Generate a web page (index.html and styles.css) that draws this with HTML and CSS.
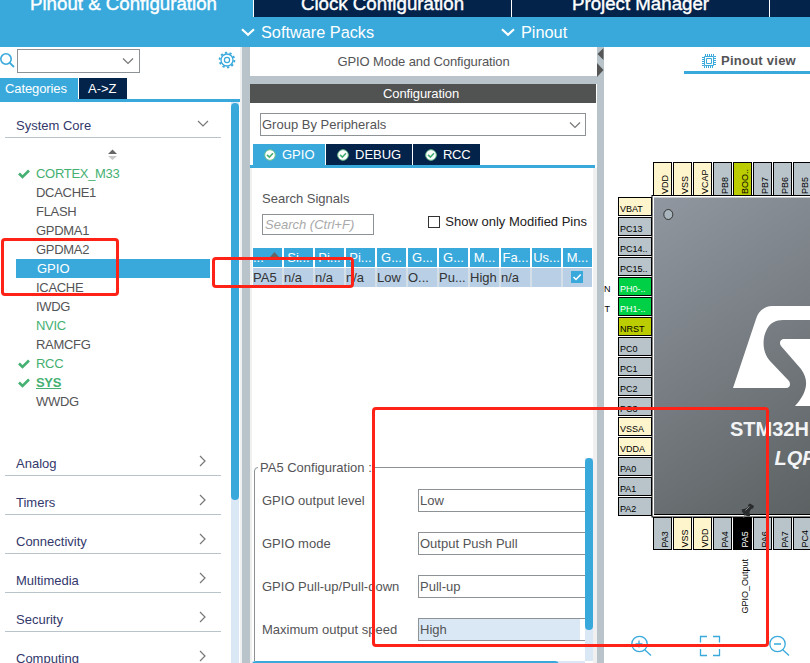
FILE: index.html
```html
<!DOCTYPE html>
<html lang="en">
<head>
    <meta charset="UTF-8">
    <meta name="viewport" content="width=device-width, initial-scale=1.0">
    <title>Pinout &amp; Configuration</title>
    <link rel="stylesheet" href="styles.css">
</head>
<body>
    <div class="app">
        <!-- Main tabs -->
        <div class="main-tabs">
            <div class="main-tab active">Pinout &amp; Configuration</div>
            <div class="main-tab">Clock Configuration</div>
            <div class="main-tab">Project Manager</div>
            <div class="main-tab rest"></div>
        </div>
        <div class="sub-bar">
            <div class="sub-item packs">
                <svg width="14" height="9" viewBox="0 0 14 9"><path d="M1 1.2l6 5.6 6-5.6" fill="none" stroke="#fff" stroke-width="2.2"/></svg>
                <span>Software Packs</span>
            </div>
            <div class="sub-item">
                <svg width="14" height="9" viewBox="0 0 14 9"><path d="M1 1.2l6 5.6 6-5.6" fill="none" stroke="#fff" stroke-width="2.2"/></svg>
                <span>Pinout</span>
            </div>
        </div>

        <div class="workspace">
            <!-- Categories -->
            <div class="sidebar">
                <div class="search-row">
                    <svg class="search-icon" width="15" height="15" viewBox="0 0 15 15"><circle cx="6" cy="6" r="5.2" fill="none" stroke="#39a9dc" stroke-width="1.6"/><path d="M9.8 9.8l4.2 4.2" stroke="#39a9dc" stroke-width="1.8"/></svg>
                    <div class="search-box">
                        <svg width="12" height="8" viewBox="0 0 12 8"><path d="M1 1.5l5 5 5-5" fill="none" stroke="#777" stroke-width="1.2"/></svg>
                    </div>
                    <svg class="gear" width="18" height="18" viewBox="0 0 18 18"><g fill="none" stroke="#39a9dc"><circle cx="9" cy="9" r="6" stroke-width="1.3"/><circle cx="9" cy="9" r="7.4" stroke-width="1.8" stroke-dasharray="2.3 2.35"/><circle cx="9" cy="9" r="2.6" stroke-width="1.2"/></g></svg>
                </div>
                <div class="side-tabs">
                    <div class="side-tab active">Categories</div>
                    <div class="side-tab">A-&gt;Z</div>
                </div>
                <div class="side-body">
                    <div class="tree">
                        <div class="group open">
                            <span>System Core</span>
                            <svg width="12" height="8" viewBox="0 0 12 8"><path d="M1 1l5 5 5-5" fill="none" stroke="#777" stroke-width="1.2"/></svg>
                        </div>
                        <div class="sorter">
                            <svg width="9" height="12" viewBox="0 0 9 12"><path d="M0 5l4.5-4.5L9 5z" fill="#666"/><path d="M0 7l4.5 4L9 7z" fill="#c8c8c8"/></svg>
                        </div>
                        <ul class="items">
                            <li class="used"><svg class="tick" width="12" height="10" viewBox="0 0 12 10"><path d="M1 4.5l3.5 3.5L11 1.5" fill="none" stroke="#44b072" stroke-width="2.6"/></svg>CORTEX_M33</li>
                            <li>DCACHE1</li>
                            <li>FLASH</li>
                            <li>GPDMA1</li>
                            <li>GPDMA2</li>
                            <li class="selected">GPIO</li>
                            <li>ICACHE</li>
                            <li>IWDG</li>
                            <li class="used">NVIC</li>
                            <li>RAMCFG</li>
                            <li class="used"><svg class="tick" width="12" height="10" viewBox="0 0 12 10"><path d="M1 4.5l3.5 3.5L11 1.5" fill="none" stroke="#44b072" stroke-width="2.6"/></svg>RCC</li>
                            <li class="used current"><svg class="tick" width="12" height="10" viewBox="0 0 12 10"><path d="M1 4.5l3.5 3.5L11 1.5" fill="none" stroke="#44b072" stroke-width="2.6"/></svg><span>SYS</span></li>
                            <li>WWDG</li>
                        </ul>
                        <div class="group"><span>Analog</span><svg width="8" height="12" viewBox="0 0 8 12"><path d="M1 1l5 5-5 5" fill="none" stroke="#777" stroke-width="1.2"/></svg></div>
                        <div class="group"><span>Timers</span><svg width="8" height="12" viewBox="0 0 8 12"><path d="M1 1l5 5-5 5" fill="none" stroke="#777" stroke-width="1.2"/></svg></div>
                        <div class="group"><span>Connectivity</span><svg width="8" height="12" viewBox="0 0 8 12"><path d="M1 1l5 5-5 5" fill="none" stroke="#777" stroke-width="1.2"/></svg></div>
                        <div class="group"><span>Multimedia</span><svg width="8" height="12" viewBox="0 0 8 12"><path d="M1 1l5 5-5 5" fill="none" stroke="#777" stroke-width="1.2"/></svg></div>
                        <div class="group"><span>Security</span><svg width="8" height="12" viewBox="0 0 8 12"><path d="M1 1l5 5-5 5" fill="none" stroke="#777" stroke-width="1.2"/></svg></div>
                        <div class="group"><span>Computing</span><svg width="8" height="12" viewBox="0 0 8 12"><path d="M1 1l5 5-5 5" fill="none" stroke="#777" stroke-width="1.2"/></svg></div>
                    </div>
                    <div class="scroll side-scroll"><div class="thumb"></div></div>
                </div>
            </div>

            <div class="divider"></div>

            <!-- GPIO mode and configuration -->
            <div class="config">
                <div class="config-title">GPIO Mode and Configuration</div>
                <div class="config-head">Configuration</div>
                <div class="config-top">
                    <div class="group-select">
                        <span>Group By Peripherals</span>
                        <svg width="12" height="8" viewBox="0 0 12 8"><path d="M1 1.5l5 5 5-5" fill="none" stroke="#777" stroke-width="1.2"/></svg>
                    </div>
                    <div class="config-tabs">
                        <div class="config-tab gpio active"><svg width="12" height="12" viewBox="0 0 12 12"><circle cx="6" cy="6" r="5.3" fill="#fff" stroke="#6cc08e"/><path d="M3 5.8l2.4 2.3L9 4.3" fill="none" stroke="#44b072" stroke-width="1.6"/></svg>GPIO</div>
                        <div class="config-tab debug"><svg width="12" height="12" viewBox="0 0 12 12"><circle cx="6" cy="6" r="5.3" fill="#fff" stroke="#6cc08e"/><path d="M3 5.8l2.4 2.3L9 4.3" fill="none" stroke="#44b072" stroke-width="1.6"/></svg>DEBUG</div>
                        <div class="config-tab rcc"><svg width="12" height="12" viewBox="0 0 12 12"><circle cx="6" cy="6" r="5.3" fill="#fff" stroke="#6cc08e"/><path d="M3 5.8l2.4 2.3L9 4.3" fill="none" stroke="#44b072" stroke-width="1.6"/></svg>RCC</div>
                    </div>
                </div>
                <div class="config-body">
                    <div class="signals-label">Search Signals</div>
                    <div class="signals-row">
                        <div class="signals-input">Search (Ctrl+F)</div>
                        <div class="modified"><span class="box"></span>Show only Modified Pins</div>
                    </div>
                    <div class="pin-table">
                        <div class="th first">...<svg width="9" height="5" viewBox="0 0 9 5"><path d="M0 5l4.5-5L9 5z" fill="#666"/></svg></div>
                        <div class="th">Si...</div>
                        <div class="th">Pi...</div>
                        <div class="th">Pi...</div>
                        <div class="th">G...</div>
                        <div class="th">G...</div>
                        <div class="th">G...</div>
                        <div class="th">M...</div>
                        <div class="th">Fa...</div>
                        <div class="th">Us...</div>
                        <div class="th">M...</div>
                        <div class="td">PA5</div>
                        <div class="td">n/a</div>
                        <div class="td">n/a</div>
                        <div class="td">n/a</div>
                        <div class="td">Low</div>
                        <div class="td">O...</div>
                        <div class="td">Pu...</div>
                        <div class="td">High</div>
                        <div class="td">n/a</div>
                        <div class="td"></div>
                        <div class="td check"><svg width="12" height="12" viewBox="0 0 12 12"><path d="M0 0h12v12H0z" fill="#39a9dc"/><path d="M2.5 6l2.5 2.5L9.7 3.5" fill="none" stroke="#fff" stroke-width="1.5"/></svg></div>
                    </div>
                    <div class="pin-config">
                        <div class="pin-scroll-area">
                            <fieldset>
                                <legend>PA5 Configuration :</legend>
                                <div class="field"><label>GPIO output level</label><div class="value">Low</div></div>
                                <div class="field"><label>GPIO mode</label><div class="value">Output Push Pull</div></div>
                                <div class="field"><label>GPIO Pull-up/Pull-down</label><div class="value">Pull-up</div></div>
                                <div class="field"><label>Maximum output speed</label><div class="value edited">High</div></div>
                            </fieldset>
                        </div>
                        <div class="scroll pin-scroll"><div class="thumb"></div></div>
                    </div>
                    <div class="scroll-x"><div class="thumb-x"></div></div>
                </div>
            </div>

            <div class="divider split">
                <svg width="7" height="32" viewBox="0 0 7 32"><path d="M6.5 1v12L0.5 7zM0 16v14l6.5-7z" fill="#555"/></svg>
            </div>

            <!-- Pinout view -->
            <div class="pinout">
                <div class="view-tab">
                    <svg width="14" height="14" viewBox="0 0 14 14"><g fill="none" stroke="#39a9dc"><path d="M2.5 2.5h9v9h-9z"/><path d="M4.5 4.5h5v5h-5z"/><path d="M3.5 0v2M5.5 0v2M7.5 0v2M9.5 0v2M11.5 0v2M2.5 12v2M4.5 12v2M6.5 12v2M8.5 12v2M10.5 12v2M0 3.5h2M0 5.5h2M0 7.5h2M0 9.5h2M0 11.5h2M12 2.5h2M12 4.5h2M12 6.5h2M12 8.5h2M12 10.5h2"/></g></svg>
                    Pinout view
                </div>
                <svg class="chip" width="206" height="589" viewBox="604 74 206 589">
                    <defs>
                        <linearGradient id="body" gradientUnits="userSpaceOnUse" x1="654" y1="197" x2="850" y2="500">
                            <stop offset="0" stop-color="#9097a0"/>
                            <stop offset="1" stop-color="#5b6061"/>
                        </linearGradient>
                    </defs>

                    <!-- left pins -->
                    <g class="pins">
                        <rect class="power" x="618.5" y="197.5" width="33" height="18"/>
                        <rect x="618.5" y="217.5" width="33" height="18"/>
                        <rect x="618.5" y="237.5" width="33" height="18"/>
                        <rect x="618.5" y="257.5" width="33" height="18"/>
                        <rect class="on" x="618.5" y="277.5" width="33" height="18"/>
                        <rect class="on" x="618.5" y="297.5" width="33" height="18"/>
                        <rect class="boot" x="618.5" y="317.5" width="33" height="18"/>
                        <rect x="618.5" y="337.5" width="33" height="18"/>
                        <rect x="618.5" y="357.5" width="33" height="18"/>
                        <rect x="618.5" y="377.5" width="33" height="18"/>
                        <rect x="618.5" y="397.5" width="33" height="18"/>
                        <rect class="power" x="618.5" y="417.5" width="33" height="18"/>
                        <rect class="power" x="618.5" y="437.5" width="33" height="18"/>
                        <rect x="618.5" y="457.5" width="33" height="18"/>
                        <rect x="618.5" y="477.5" width="33" height="18"/>
                        <rect x="618.5" y="497.5" width="33" height="18"/>
                    </g>
                    <g class="names">
                        <text x="620" y="212">VBAT</text>
                        <text x="620" y="232">PC13</text>
                        <text x="620" y="252">PC14..</text>
                        <text x="620" y="272">PC15..</text>
                        <text class="light" x="620" y="292">PH0-..</text>
                        <text class="light" x="620" y="312">PH1-..</text>
                        <text x="620" y="332">NRST</text>
                        <text x="620" y="352">PC0</text>
                        <text x="620" y="372">PC1</text>
                        <text x="620" y="392">PC2</text>
                        <text x="620" y="412">PC3</text>
                        <text x="620" y="432">VSSA</text>
                        <text x="620" y="452">VDDA</text>
                        <text x="620" y="472">PA0</text>
                        <text x="620" y="492">PA1</text>
                        <text x="620" y="512">PA2</text>
                        <text x="604" y="292">N</text>
                        <text x="604.5" y="312">T</text>
                    </g>

                    <!-- top and bottom pins -->
                    <g class="pins">
                        <rect class="power" x="653.5" y="162.5" width="18" height="33"/>
                        <rect class="power" x="673.5" y="162.5" width="18" height="33"/>
                        <rect class="power" x="693.5" y="162.5" width="18" height="33"/>
                        <rect x="713.5" y="162.5" width="18" height="33"/>
                        <rect class="boot" x="733.5" y="162.5" width="18" height="33"/>
                        <rect x="753.5" y="162.5" width="18" height="33"/>
                        <rect x="773.5" y="162.5" width="18" height="33"/>
                        <rect x="793.5" y="162.5" width="18" height="33"/>
                        <rect x="653.5" y="517.5" width="18" height="32"/>
                        <rect class="power" x="673.5" y="517.5" width="18" height="32"/>
                        <rect class="power" x="693.5" y="517.5" width="18" height="32"/>
                        <rect x="713.5" y="517.5" width="18" height="32"/>
                        <rect class="picked" x="733.5" y="517.5" width="18" height="32"/>
                        <rect x="753.5" y="517.5" width="18" height="32"/>
                        <rect x="773.5" y="517.5" width="18" height="32"/>
                        <rect x="793.5" y="517.5" width="18" height="32"/>
                    </g>
                    <g class="names" transform="translate(668 194) rotate(-90)">
                        <text x="0" y="0">VDD</text>
                        <text x="0" y="20">VSS</text>
                        <text x="0" y="40">VCAP</text>
                        <text x="0" y="60">PB8</text>
                        <text x="0" y="80">BOO..</text>
                        <text x="0" y="100">PB7</text>
                        <text x="0" y="120">PB6</text>
                        <text x="0" y="140">PB5</text>
                    </g>
                    <g class="names" transform="translate(668 547.5) rotate(-90)">
                        <text x="0" y="0">PA3</text>
                        <text x="0" y="20">VSS</text>
                        <text x="0" y="40">VDD</text>
                        <text x="0" y="60">PA4</text>
                        <text class="light" x="0" y="80">PA5</text>
                        <text x="0" y="100">PA6</text>
                        <text x="0" y="120">PA7</text>
                        <text x="0" y="140">PC4</text>
                        <text x="-66" y="80">GPIO_Output</text>
                    </g>

                    <!-- package -->
                    <rect x="652" y="195.5" width="320" height="321.5" fill="#fff" stroke="#000"/>
                    <rect x="654" y="197.5" width="318" height="317" fill="url(#body)"/>
                    <path d="M654 514.5h160" stroke="#000"/>
                    <ellipse cx="668.3" cy="214.5" rx="4.5" ry="5" fill="#aab6be" stroke="#333"/>
                    <path fill="#fff" d="M812 306H772C764 306 758 312 756 319L733 388H786C790 388 791 384 789 381L770 361C762 352 762 338 767 329C770 323 776 320 783 320H812Z"/>
                    <path fill="#fff" d="M812 339H783C780 340 779 343 781 346L801 369C809 380 808 392 795 406H812Z"/>
                    <text class="part" x="730" y="435.5">STM32H</text>
                    <text class="pack" x="774.5" y="465">LQFP</text>

                    <!-- push pin on PA5 -->
                    <path d="M743.5 517.5l3-5" stroke="#777" stroke-width="1.3"/>
                    <path d="M741.5 509.5l4.500-1 2.500-2-.500-1.500 2-1.500 4 2.500-1 2.500-2 .500-1.500 3 .500 4c-4 1-7.500-2-8.500-6.500z" fill="#292b2c"/>
                    <path d="M745.5 510.5l4-4" stroke="#888"/>

                    <!-- zoom controls -->
                    <g fill="none" stroke="#39a9dc" stroke-width="1.3">
                        <circle cx="639.5" cy="644" r="7.7"/>
                        <path d="M645 650l6 5.5M635.5 644h7M639 640.5v7"/>
                        <path d="M700.5 642.5v-6h6.5M713 636.5h6.5v6M719.5 649v6.5H713M707 655.5h-6.5V649"/>
                        <circle cx="777.5" cy="644" r="7.7"/>
                        <path d="M783 650l6 5.5M774 644h7"/>
                    </g>
                </svg>
            </div>
        </div>

        <!-- Highlights -->
        <div class="mark mark-tree"></div>
        <div class="mark mark-row"></div>
        <div class="mark mark-fields"></div>
    </div>
</body>
</html>
```
FILE: styles.css
```css
* {
    box-sizing: border-box;
}

body {
    margin: 0;
    font-family: "Liberation Sans", Arial, sans-serif;
    font-size: 13px;
    color: #545456;
    background-color: #fff;
}

svg {
    display: block;
    flex: none;
}

.app {
    position: relative;
    width: 810px;
    height: 663px;
    overflow: hidden;
    display: flex;
    flex-direction: column;
}

/* main tabs */
.main-tabs {
    display: flex;
    gap: 1px;
    height: 17px;
    flex: none;
    background-color: #fff;
}

.main-tab {
    width: 257px;
    height: 17px;
    overflow: hidden;
    background-color: #03234b;
    color: #fff;
    font-size: 18.7px;
    line-height: 7px;
    text-align: center;
    white-space: nowrap;
    -webkit-text-stroke: 0.4px #fff;
}

.main-tab.active {
    width: 253px;
    padding-right: 6px;
    background-color: #39a9dc;
}

.main-tab.rest {
    width: 40px;
}

.sub-bar {
    display: flex;
    height: 30px;
    flex: none;
    padding-left: 241px;
    background-color: #39a9dc;
    color: #fff;
    font-size: 16.3px;
}

.sub-item {
    display: flex;
    align-items: center;
    gap: 6px;
}

.sub-item.packs {
    width: 260px;
}

.workspace {
    display: flex;
    height: 616px;
}

.divider {
    width: 8px;
    flex: none;
    background-color: #b8c4ca;
}

.divider.split {
    width: 7px;
}

/* sidebar */
.sidebar {
    width: 242px;
    flex: none;
    border-right: 2px solid #f0f0f0;
}

.search-row {
    display: flex;
    height: 31px;
    padding-top: 2px;
}

.search-icon {
    margin: 4px 2px 0 0;
}

.search-box {
    display: flex;
    align-items: center;
    justify-content: flex-end;
    width: 123px;
    height: 24px;
    padding-right: 5px;
    border: 1px solid #8c9296;
}

.gear {
    margin: 2px 0 0 78px;
}

.side-tabs {
    display: flex;
    gap: 1px;
    height: 24px;
    border-bottom: 3px solid #39a9dc;
}

.side-tab {
    width: 48px;
    padding-left: 9px;
    background-color: #03234b;
    color: #fff;
    line-height: 21px;
}

.side-tab.active {
    width: 78px;
    padding-left: 5px;
    background-color: #39a9dc;
    letter-spacing: -0.1px;
}

.side-body {
    display: flex;
    justify-content: space-between;
    height: 561px;
    overflow: hidden;
}

.scroll {
    width: 8px;
    background-color: #dae8f5;
}

.thumb {
    border-radius: 4px;
    background-color: #39a9dc;
}

.side-scroll {
    margin-right: 1px;
}

.side-scroll .thumb {
    height: 397px;
    margin-top: 1px;
}

.tree {
    width: 216px;
    margin-left: 5px;
}

.group {
    display: flex;
    justify-content: space-between;
    align-items: flex-end;
    height: 39px;
    padding: 0 14px 4px 11px;
    border-bottom: 1px solid #b8c4ca;
    color: #33386b;
}

.group svg {
    margin-bottom: 4px;
}

.group.open {
    height: 36px;
    padding-right: 12px;
}

.group.open svg {
    margin-bottom: 5px;
}

.sorter {
    height: 26px;
    padding: 11px 0 0 103px;
}

.items {
    margin: 0;
    padding: 0 11px 0 11px;
    height: 273px;
    list-style: none;
}

.items li {
    display: flex;
    align-items: center;
    height: 19px;
    padding-left: 20px;
    letter-spacing: -0.3px;
}

.items .used {
    color: #44b072;
}

.items .selected {
    padding-left: 21px;
    background-color: #39a9dc;
    color: #fff;
    letter-spacing: 0;
}

.items .current {
    font-weight: bold;
}

.items .current span {
    text-decoration: underline;
}

.tick {
    margin: 0 6px 0 -18px;
}

/* configuration panel */
.config {
    width: 347px;
    flex: none;
    display: flex;
    flex-direction: column;
}

.config-title {
    height: 37px;
    padding-bottom: 1px;
    border-bottom: 8px solid #b8c4ca;
    line-height: 29px;
    text-align: center;
    letter-spacing: -0.1px;
}

.config-head {
    width: 346px;
    height: 19px;
    background-color: #515252;
    color: #fff;
    line-height: 19px;
    text-align: center;
    padding-right: 4px;
    letter-spacing: -0.1px;
}

.config-top {
    height: 65px;
    padding: 10px 0 0 1px;
    width: 345px;
    border-bottom: 3px solid #39a9dc;
}

.group-select {
    display: flex;
    align-items: center;
    justify-content: space-between;
    width: 326px;
    height: 23px;
    margin-left: 9px;
    padding: 0 4px 0 1px;
    border: 1px solid #8c9296;
}

.config-tabs {
    display: flex;
    gap: 1px;
    margin: 8px 0 0 2px;
}

.config-tab {
    display: flex;
    align-items: center;
    gap: 6px;
    height: 21px;
    padding-left: 11px;
    background-color: #03234b;
    color: #fff;
}

.config-tab.active {
    background-color: #39a9dc;
}

.config-tab.gpio {
    width: 72px;
}

.config-tab.debug {
    width: 86px;
}

.config-tab.rcc {
    width: 67px;
    padding-left: 12px;
    letter-spacing: -0.3px;
}

.config-body {
    height: 495px;
    border: solid #f0f0f0;
    border-width: 0 4px 0 2px;
    overflow: hidden;
}

.signals-label {
    padding: 23px 0 0 10px;
    line-height: 15px;
}

.signals-row {
    display: flex;
    justify-content: space-between;
    padding: 8px 6px 0 10px;
}

.signals-input {
    width: 112px;
    height: 21px;
    padding-left: 2px;
    border: 1px solid #8c9296;
    color: #a9a9a9;
    font-style: italic;
    line-height: 19px;
}

.modified {
    display: flex;
    align-items: center;
    gap: 5px;
    height: 15px;
    color: #222;
}

.modified .box {
    width: 12px;
    height: 12px;
    border: 1px solid #333;
}

.pin-table {
    display: grid;
    grid-template-columns: repeat(11, 29px);
    column-gap: 2px;
    row-gap: 1px;
    margin: 13px 0 0 1px;
    background-image: linear-gradient(#fff 20px, #d5dfe8 20px);
    width: 339px;
}

.th {
    height: 19px;
    background-color: #39a9dc;
    color: #fff;
    line-height: 19px;
    text-align: center;
    white-space: nowrap;
}

.th.first {
    display: flex;
    justify-content: space-between;
    padding-right: 3px;
}

.th.first svg {
    margin-top: 4px;
}

.td {
    height: 19px;
    background-color: #b8cfe6;
    color: #333;
    line-height: 19px;
    white-space: nowrap;
}

.td.check {
    padding: 3px 0 0 8px;
}

.pin-config {
    display: flex;
    height: 203px;
    margin-top: 171px;
}

.pin-scroll-area {
    width: 333px;
    overflow: hidden;
}

fieldset {
    width: 420px;
    height: 230px;
    margin: 2px 0 0 2px;
    padding: 14px 0 0 7px;
    border: 1px solid #8c9296;
    border-radius: 4px;
}

legend {
    margin-left: -4px;
    padding: 0 1px 0 2px;
    line-height: 15px;
}

.field {
    display: flex;
    align-items: center;
    height: 23px;
    margin-bottom: 20px;
}

.field label {
    width: 156px;
}

.value {
    width: 240px;
    height: 23px;
    padding-left: 1px;
    border: 1px solid #8c9296;
    line-height: 21px;
}

.value.edited {
    background-image: linear-gradient(to right, #dae8f5 161px, #fff 161px);
}

.pin-scroll .thumb {
    height: 172px;
}

.scroll-x {
    width: 333px;
    height: 10px;
    background-color: #dae8f5;
}

.thumb-x {
    width: 307px;
    height: 8px;
    border-radius: 4px;
    background-color: #39a9dc;
}

/* pinout view */
.pinout {
    width: 206px;
    overflow: hidden;
}

.view-tab {
    display: flex;
    align-items: center;
    gap: 5px;
    height: 27px;
    margin-left: 80px;
    padding-left: 18px;
    border-bottom: 3px solid #39a9dc;
    padding-top: 3px;
    font-weight: bold;
    letter-spacing: 0.25px;
}

.pins rect {
    fill: #b8c4ca;
    stroke: #000;
}

.pins .power {
    fill: #fff5cc;
}

.pins .boot {
    fill: #bbcc00;
}

.pins .on {
    fill: #00d046;
}

.pins .picked {
    fill: #000;
}

.names text {
    font-size: 9px;
    fill: #000;
}

.names .light {
    fill: #fff;
}

.part {
    font-size: 20px;
    font-weight: bold;
    fill: #f2f4f5;
}

.pack {
    font-size: 20px;
    font-weight: bold;
    font-style: italic;
    fill: #f2f4f5;
}

/* highlight frames */
.mark {
    position: absolute;
    border: 3px solid #ff2216;
    border-radius: 4px;
}

.mark-tree {
    left: 1px;
    top: 238px;
    width: 118px;
    height: 58px;
}

.mark-row {
    left: 212px;
    top: 257px;
    width: 142px;
    height: 31px;
}

.mark-fields {
    left: 372px;
    top: 407px;
    width: 397px;
    height: 240px;
}
```
